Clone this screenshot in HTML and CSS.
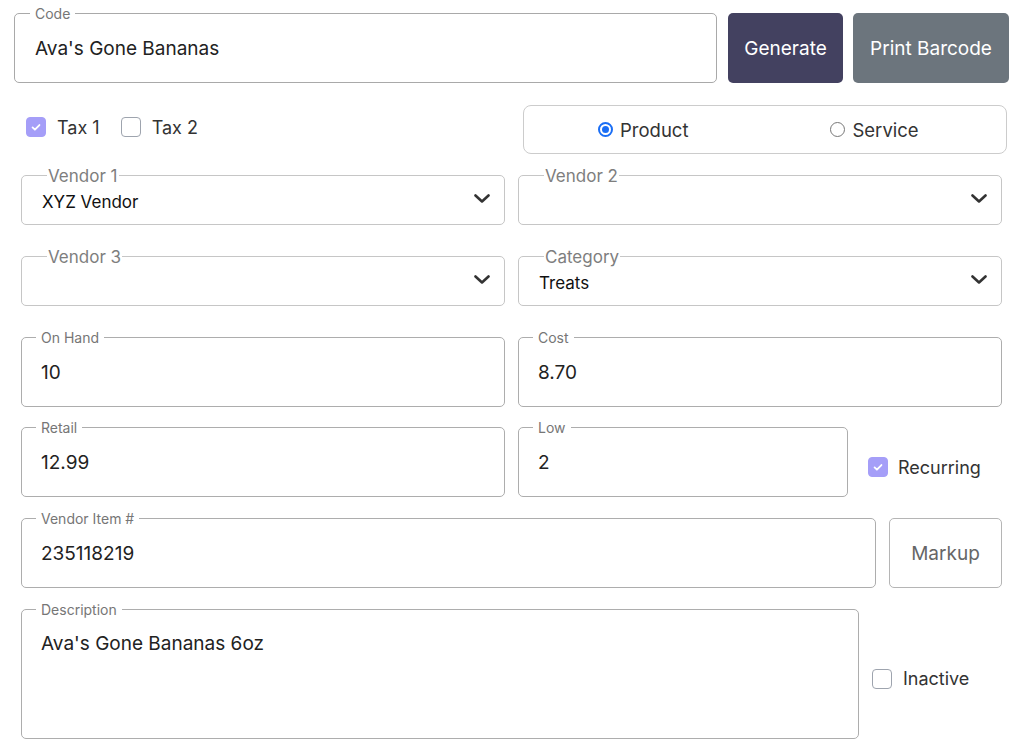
FILE: index.html
```html
<!DOCTYPE html>
<html lang="en">
<head>
<meta charset="utf-8">
<title>Item</title>
<link rel="stylesheet" href="styles.css">
</head>
<body>
<div class="form">
  <div class="row row-code">
    <div class="field field-code">
      <span class="label label-sm label-code">Code</span>
      <span class="value">Ava's Gone Bananas</span>
    </div>
    <button class="btn btn-dark">Generate</button>
    <button class="btn btn-gray">Print Barcode</button>
  </div>

  <div class="row row-type">
    <div class="checks">
      <span class="check"><span class="box checked"><svg viewBox="0 0 20 20"><path d="M6.2 10.4l2.6 2.6 5-5.2"/></svg></span>Tax 1</span>
      <span class="check"><span class="box"></span>Tax 2</span>
    </div>
    <div class="type-box">
      <span class="radio"><span class="dot on"></span>Product</span>
      <span class="radio"><span class="dot"></span>Service</span>
    </div>
  </div>

  <div class="row row-select r3">
    <div class="field select half">
      <span class="label label-lg">Vendor 1</span>
      <span class="sel-value">XYZ Vendor</span>
      <svg class="chev" viewBox="0 0 16 9"><path d="M1.5 1.5l6.5 6 6.5-6"/></svg>
    </div>
    <div class="field select half">
      <span class="label label-lg">Vendor 2</span>
      <span class="sel-value"></span>
      <svg class="chev" viewBox="0 0 16 9"><path d="M1.5 1.5l6.5 6 6.5-6"/></svg>
    </div>
  </div>

  <div class="row row-select r4">
    <div class="field select half">
      <span class="label label-lg">Vendor 3</span>
      <span class="sel-value"></span>
      <svg class="chev" viewBox="0 0 16 9"><path d="M1.5 1.5l6.5 6 6.5-6"/></svg>
    </div>
    <div class="field select half">
      <span class="label label-lg">Category</span>
      <span class="sel-value">Treats</span>
      <svg class="chev" viewBox="0 0 16 9"><path d="M1.5 1.5l6.5 6 6.5-6"/></svg>
    </div>
  </div>

  <div class="row row-input r5">
    <div class="field num half">
      <span class="label label-sm">On Hand</span>
      <span class="value">10</span>
    </div>
    <div class="field num half">
      <span class="label label-sm">Cost</span>
      <span class="value">8.70</span>
    </div>
  </div>

  <div class="row row-input r6">
    <div class="field num half">
      <span class="label label-sm">Retail</span>
      <span class="value">12.99</span>
    </div>
    <div class="field num low">
      <span class="label label-sm">Low</span>
      <span class="value">2</span>
    </div>
    <span class="check check-recurring"><span class="box checked"><svg viewBox="0 0 20 20"><path d="M6.2 10.4l2.6 2.6 5-5.2"/></svg></span>Recurring</span>
  </div>

  <div class="row row-input r7">
    <div class="field num item">
      <span class="label label-sm">Vendor Item #</span>
      <span class="value">235118219</span>
    </div>
    <button class="btn btn-outline">Markup</button>
  </div>

  <div class="row r8">
    <div class="field desc">
      <span class="label label-sm">Description</span>
      <span class="desc-value">Ava's Gone Bananas 6oz</span>
    </div>
    <span class="check check-inactive"><span class="box"></span>Inactive</span>
  </div>
</div>
</body>
</html>
```

FILE: styles.css
```css
html, body {
  margin: 0;
  background: #ffffff;
}

body {
  font-family: Inter, "Noto Sans", "Liberation Sans", sans-serif;
  color: #222222;
}

.form {
  width: 1024px;
  box-sizing: border-box;
  padding: 13px 22px 0 21px;
}

.row {
  display: flex;
  align-items: center;
}

/* ---------- fields ---------- */
.field {
  position: relative;
  box-sizing: border-box;
  border: 1px solid #b3b3b3;
  border-radius: 5px;
  display: flex;
  align-items: center;
  background: #fff;
  flex: none;
}

.label {
  position: absolute;
  top: -0.5px;
  transform: translateY(-50%);
  background: #fff;
  line-height: 1;
  white-space: nowrap;
}

.label-sm {
  left: 14px;
  padding: 0 5px;
  font-size: 14px;
  color: #767676;
}

.label-code {
  left: 15px;
}

.label-lg {
  left: 25px;
  padding: 0 1px;
  font-size: 17px;
  color: #7e7e7e;
}

.value {
  font-size: 19px;
  color: #222;
  padding-left: 19px;
}

/* ---------- row 1 ---------- */
.row-code {
  margin: 0 -7px;
  height: 70px;
}

.field-code {
  width: 703px;
  height: 70px;
  margin-right: 11px;
  border-color: #a9a9a9;
}

.field-code .value {
  padding-left: 20px;
}

.btn {
  font-family: inherit;
  font-size: 19px;
  border: none;
  border-radius: 5px;
  height: 70px;
  padding: 0;
  cursor: pointer;
  flex: none;
  box-sizing: border-box;
}

.btn-dark {
  width: 115px;
  margin-right: 10px;
  background: #434160;
  color: #ffffff;
}

.btn-gray {
  width: 156px;
  background: #6c757d;
  color: #ffffff;
}

.btn-outline {
  width: 113px;
  background: #fff;
  border: 1px solid #b5b5b5;
  color: #666666;
}

/* ---------- row 2 ---------- */
.row-type {
  margin-top: 22px;
  height: 49px;
}

.checks {
  flex: 1;
  display: flex;
  align-items: center;
  padding-left: 5px;
  padding-bottom: 5px;
  gap: 21px;
}

.check {
  display: inline-flex;
  align-items: center;
  font-size: 18px;
  color: #333;
  gap: 11px;
}

.box {
  width: 20px;
  height: 20px;
  box-sizing: border-box;
  border: 1px solid #9ea4ae;
  border-radius: 4px;
  background: #fff;
  display: inline-flex;
  flex: none;
}

.box.checked {
  background: #a59ef8;
  border-color: #a59ef8;
}

.box svg {
  width: 18px;
  height: 18px;
}

.box svg path {
  fill: none;
  stroke: #ffffff;
  stroke-width: 2;
  stroke-linecap: round;
  stroke-linejoin: round;
}

.type-box {
  width: 484px;
  height: 49px;
  margin-right: -5px;
  box-sizing: border-box;
  border: 1px solid #cccccc;
  border-radius: 8px;
  display: flex;
  align-items: center;
  padding-left: 74px;
  gap: 142px;
  flex: none;
}

.radio {
  display: inline-flex;
  align-items: center;
  gap: 7px;
  font-size: 18.5px;
  color: #333;
}

.dot {
  width: 15px;
  height: 15px;
  box-sizing: border-box;
  border: 1px solid #777;
  border-radius: 50%;
  display: inline-flex;
  align-items: center;
  justify-content: center;
}

.dot.on {
  border: 2px solid #1a6ef5;
}

.dot.on::after {
  content: "";
  width: 7px;
  height: 7px;
  border-radius: 50%;
  background: #1a6ef5;
}

/* ---------- selects ---------- */
.row-select {
  gap: 13px;
}

.r3 { margin-top: 21px; }
.r4 { margin-top: 31px; }

.half {
  width: 484px;
}

.select {
  height: 50px;
  border-color: #c6c6c6;
  border-radius: 5px;
}

.sel-value {
  font-size: 17px;
  color: #111;
  padding-left: 20px;
  padding-top: 3px;
  flex: 1;
}

.chev {
  width: 16px;
  height: 9px;
  margin-right: 14px;
  margin-bottom: 4px;
}

.chev path {
  fill: none;
  stroke: #333;
  stroke-width: 2.6;
  stroke-linecap: round;
  stroke-linejoin: round;
}

/* ---------- inputs ---------- */
.row-input {
  gap: 13px;
}

.num {
  height: 70px;
  border-color: #adadad;
}

.r5 { margin-top: 31px; }
.r6 { margin-top: 20px; }
.r7 { margin-top: 21px; }

.low {
  width: 330px;
}

.check-recurring {
  margin-left: 7px;
  margin-top: 10px;
  gap: 10px;
}

.item {
  width: 855px;
}

/* ---------- description ---------- */
.r8 {
  margin-top: 21px;
}

.desc {
  width: 838px;
  height: 130px;
  align-items: flex-start;
  border-color: #adadad;
}

.desc-value {
  font-size: 19px;
  color: #222;
  padding: 22px 0 0 19px;
}

.check-inactive {
  margin-left: 13px;
  margin-top: 9px;
}
```
